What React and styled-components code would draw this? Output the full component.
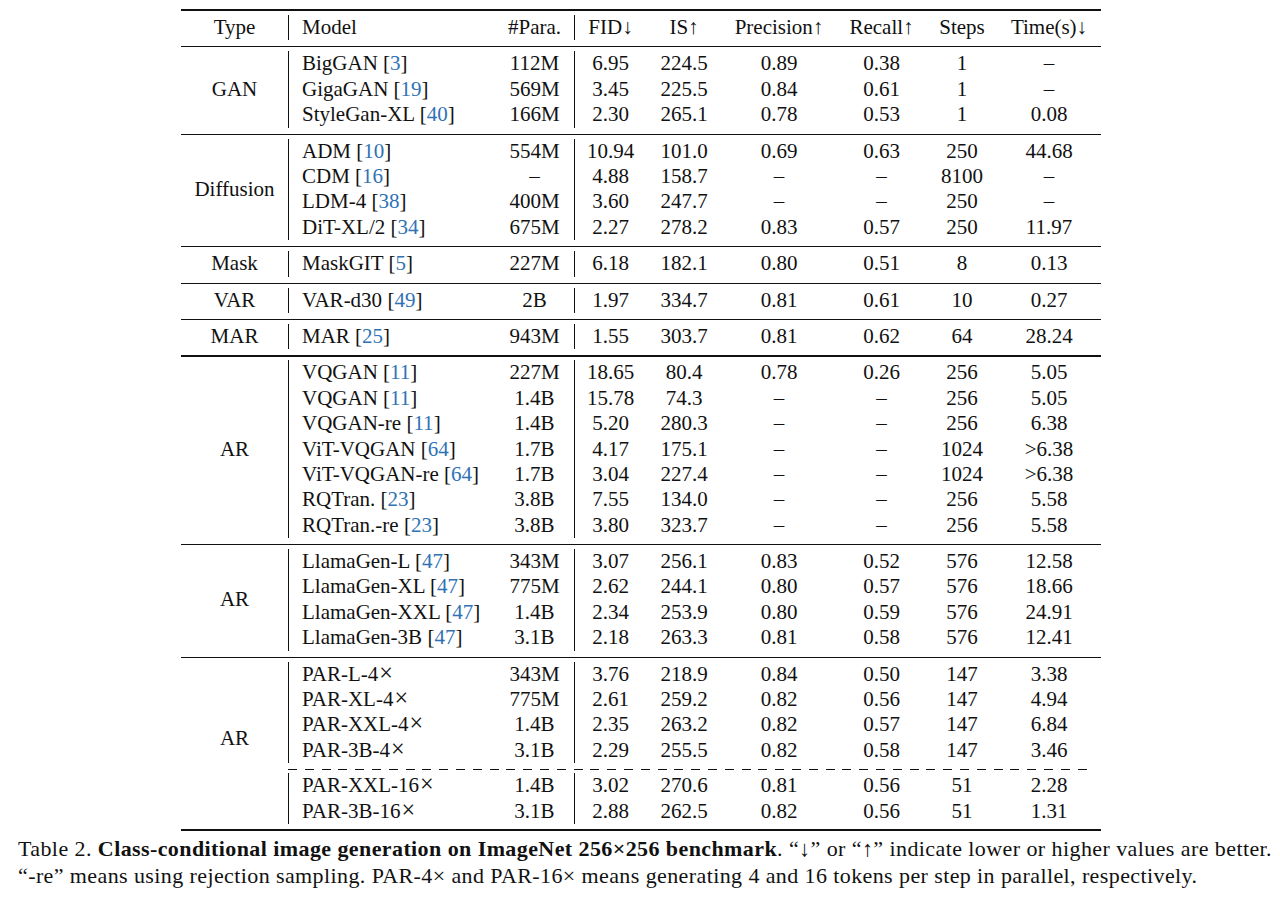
import React from 'react';
import styled, { createGlobalStyle } from 'styled-components';

const Global = createGlobalStyle`
  html, body { margin: 0; padding: 0; background: #fff; }
  body {
    font-family: "Liberation Serif", "Times New Roman", serif;
    color: #111;
  }
`;

const Page = styled.div`
  width: 1280px;
  height: 902px;
  box-sizing: border-box;
  padding-top: 9px;
  overflow: hidden;
`;

const Table = styled.div`
  margin-left: 181px;
  width: 920px;
  border-top: 2px solid #111;
  border-bottom: 2px solid #111;
  font-size: 21px;
`;

const Group = styled.div`
  display: flex;
  padding: ${(p) => (p.$rule === 2 ? 3 : 4)}px 0 ${(p) => (p.$last ? 5 : 6)}px;
  border-top: ${(p) => p.$rule || 0}px solid #111;
`;

const TypeCell = styled.div`
  width: 107px;
  flex-shrink: 0;
  display: flex;
  align-items: center;
  justify-content: center;
  padding-bottom: ${(p) => p.$lift || 0}px;
  box-sizing: border-box;
  line-height: 25.4px;
`;

const Stack = styled.div`
  display: flex;
  flex-direction: column;
  flex: 1;
`;

const Row = styled.div`
  display: grid;
  grid-template-columns: 207px 79px 72px 76px 114px 91px 70px 104px;
  height: 25.4px;
  line-height: 25.4px;
  white-space: nowrap;
`;

const ModelCell = styled.div`
  border-left: 1px solid #111;
  padding-left: 13px;
`;

const NumCell = styled.div`
  text-align: center;
  border-left: ${(p) => (p.$divider ? '1px solid #111' : 'none')};
`;

const Cite = styled.span`
  color: #2f72b4;
`;

const Mul = styled.span`
  font-size: 1.15em;
  line-height: 0;
  margin-left: 1px;
`;

const DashRule = styled.div`
  height: 1px;
  margin: 6px 11px 3px 0;
  background: repeating-linear-gradient(
    to right,
    #111 0 9px,
    transparent 9px 16.8px
  );
`;

const Caption = styled.div`
  margin-top: 4px;
  padding-left: 18px;
  width: 1254px;
  font-size: 22px;
  letter-spacing: 0.4px;
  line-height: 27px;
`;

const CaptionLine = styled.div`
  text-align: ${(p) => (p.$justify ? 'justify' : 'left')};
  text-align-last: ${(p) => (p.$justify ? 'justify' : 'left')};
  white-space: ${(p) => (p.$justify ? 'normal' : 'nowrap')};
`;

const Bold = styled.b`
  font-weight: 700;
`;

const D = '\u2013';

const groups = [
  {
    type: 'GAN',
    rule: 1,
    blocks: [[
      ['BigGAN', '3', '112M', '6.95', '224.5', '0.89', '0.38', '1', D],
      ['GigaGAN', '19', '569M', '3.45', '225.5', '0.84', '0.61', '1', D],
      ['StyleGan-XL', '40', '166M', '2.30', '265.1', '0.78', '0.53', '1', '0.08'],
    ]],
  },
  {
    type: 'Diffusion',
    rule: 1,
    blocks: [[
      ['ADM', '10', '554M', '10.94', '101.0', '0.69', '0.63', '250', '44.68'],
      ['CDM', '16', D, '4.88', '158.7', D, D, '8100', D],
      ['LDM-4', '38', '400M', '3.60', '247.7', D, D, '250', D],
      ['DiT-XL/2', '34', '675M', '2.27', '278.2', '0.83', '0.57', '250', '11.97'],
    ]],
  },
  {
    type: 'Mask',
    rule: 1,
    blocks: [[['MaskGIT', '5', '227M', '6.18', '182.1', '0.80', '0.51', '8', '0.13']]],
  },
  {
    type: 'VAR',
    rule: 1,
    blocks: [[['VAR-d30', '49', '2B', '1.97', '334.7', '0.81', '0.61', '10', '0.27']]],
  },
  {
    type: 'MAR',
    rule: 1,
    blocks: [[['MAR', '25', '943M', '1.55', '303.7', '0.81', '0.62', '64', '28.24']]],
  },
  {
    type: 'AR',
    rule: 2,
    blocks: [[
      ['VQGAN', '11', '227M', '18.65', '80.4', '0.78', '0.26', '256', '5.05'],
      ['VQGAN', '11', '1.4B', '15.78', '74.3', D, D, '256', '5.05'],
      ['VQGAN-re', '11', '1.4B', '5.20', '280.3', D, D, '256', '6.38'],
      ['ViT-VQGAN', '64', '1.7B', '4.17', '175.1', D, D, '1024', '>6.38'],
      ['ViT-VQGAN-re', '64', '1.7B', '3.04', '227.4', D, D, '1024', '>6.38'],
      ['RQTran.', '23', '3.8B', '7.55', '134.0', D, D, '256', '5.58'],
      ['RQTran.-re', '23', '3.8B', '3.80', '323.7', D, D, '256', '5.58'],
    ]],
  },
  {
    type: 'AR',
    rule: 1,
    blocks: [[
      ['LlamaGen-L', '47', '343M', '3.07', '256.1', '0.83', '0.52', '576', '12.58'],
      ['LlamaGen-XL', '47', '775M', '2.62', '244.1', '0.80', '0.57', '576', '18.66'],
      ['LlamaGen-XXL', '47', '1.4B', '2.34', '253.9', '0.80', '0.59', '576', '24.91'],
      ['LlamaGen-3B', '47', '3.1B', '2.18', '263.3', '0.81', '0.58', '576', '12.41'],
    ]],
  },
  {
    type: 'AR',
    rule: 1,
    lift: 9,
    last: true,
    blocks: [
      [
        ['PAR-L-4', 'x', '343M', '3.76', '218.9', '0.84', '0.50', '147', '3.38'],
        ['PAR-XL-4', 'x', '775M', '2.61', '259.2', '0.82', '0.56', '147', '4.94'],
        ['PAR-XXL-4', 'x', '1.4B', '2.35', '263.2', '0.82', '0.57', '147', '6.84'],
        ['PAR-3B-4', 'x', '3.1B', '2.29', '255.5', '0.82', '0.58', '147', '3.46'],
      ],
      [
        ['PAR-XXL-16', 'x', '1.4B', '3.02', '270.6', '0.81', '0.56', '51', '2.28'],
        ['PAR-3B-16', 'x', '3.1B', '2.88', '262.5', '0.82', '0.56', '51', '1.31'],
      ],
    ],
  },
];

function DataRow({ r }) {
  const [name, cite, para, ...nums] = r;
  return (
    <Row>
      <ModelCell>
        {name}
        {cite === 'x' ? (
          <Mul>×</Mul>
        ) : (
          cite && (
            <>
              {' ['}
              <Cite>{cite}</Cite>
              {']'}
            </>
          )
        )}
      </ModelCell>
      <NumCell>{para}</NumCell>
      {nums.map((n, i) => (
        <NumCell key={i} $divider={i === 0}>
          {n}
        </NumCell>
      ))}
    </Row>
  );
}

export default function App() {
  return (
    <>
      <Global />
      <Page>
        <Table>
          <Group>
            <TypeCell>Type</TypeCell>
            <Stack>
              <Row>
                <ModelCell>Model</ModelCell>
                <NumCell>#Para.</NumCell>
                <NumCell $divider>FID↓</NumCell>
                <NumCell>IS↑</NumCell>
                <NumCell>Precision↑</NumCell>
                <NumCell>Recall↑</NumCell>
                <NumCell>Steps</NumCell>
                <NumCell>Time(s)↓</NumCell>
              </Row>
            </Stack>
          </Group>
          {groups.map((g, gi) => (
            <Group key={gi} $rule={g.rule} $last={g.last}>
              <TypeCell $lift={g.lift}>{g.type}</TypeCell>
              <Stack>
                {g.blocks.map((b, bi) => (
                  <React.Fragment key={bi}>
                    {bi > 0 && <DashRule />}
                    <div>
                      {b.map((r, ri) => (
                        <DataRow key={ri} r={r} />
                      ))}
                    </div>
                  </React.Fragment>
                ))}
              </Stack>
            </Group>
          ))}
        </Table>
        <Caption>
          <CaptionLine $justify>
            Table 2. <Bold>Class-conditional image generation on ImageNet 256×256 benchmark</Bold>. “↓” or “↑” indicate lower or higher values are better.
          </CaptionLine>
          <CaptionLine>
            “-re” means using rejection sampling. PAR-4× and PAR-16× means generating 4 and 16 tokens per step in parallel, respectively.
          </CaptionLine>
        </Caption>
      </Page>
    </>
  );
}
